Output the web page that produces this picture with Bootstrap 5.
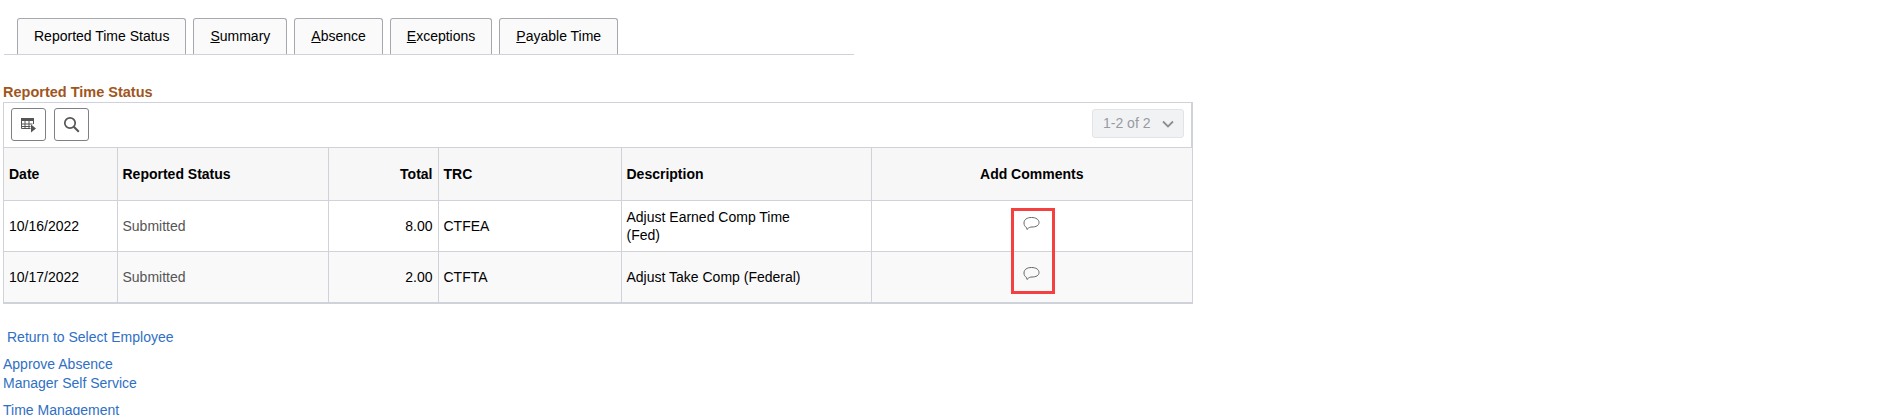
<!DOCTYPE html>
<html lang="en">
<head>
    <meta charset="UTF-8">
    <meta name="viewport" content="width=device-width, initial-scale=1.0">
    <title>Reported Time Status</title>
    <link href="https://cdn.jsdelivr.net/npm/bootstrap@5.3.0/dist/css/bootstrap.min.css" rel="stylesheet">
    <style>
        body {
            background-color: #fff;
            color: #000;
            font-family: "Liberation Sans", Arial, sans-serif;
            font-size: 14px;
        }
        .page-wrap {
            padding: 18px 0 0 3px;
        }
        /* tabs */
        .tab-strip {
            width: 850px;
            margin-left: 1px;
            padding-left: 13px;
            gap: 7px;
            height: 37px;
            border-bottom: 1px solid #cfd2d8;
        }
        .tab-strip .nav-link {
            height: 36px;
            padding: 0 16px;
            line-height: 34px;
            font-size: 14px;
            color: #000;
            background-color: #fafafb;
            border: 1px solid #a5a9af;
            border-bottom: 0;
            border-radius: 3px 3px 0 0;
        }
        .tab-strip .nav-link u {
            text-decoration-thickness: 1px;
        }
        .grid-title {
            margin: 28px 0 0;
            height: 19px;
            line-height: 19px;
            font-size: 14.5px;
            font-weight: 700;
            color: #a0561c;
        }
        /* grid */
        .grid-box {
            width: 1190px;
            border: 1px solid #cfd2d8;
            border-bottom-width: 2px;
            border-right-width: 2px;
        }
        .grid-tools {
            height: 44px;
            padding: 5px 7px 0;
        }
        .tool-btn {
            width: 35px;
            height: 33px;
            padding: 0;
            background: #fff;
            border: 1px solid #7d8187;
            border-radius: 3px;
        }
        .pager-btn {
            width: 92px;
            height: 29px;
            margin-top: 1px;
            padding: 0 9px 0 10px;
            color: #979ba1;
            font-size: 14px;
            background-color: #f1f2f4;
            border: 1px solid #e2e4e8;
            border-radius: 3px;
        }
        .grid-table {
            table-layout: fixed;
            width: 1188px;
            margin: 0;
            font-size: 14px;
            color: #000;
        }
        .grid-table th, .grid-table td {
            padding: 0 5px;
            vertical-align: middle;
            line-height: 18px;
            background: transparent;
            border: 0;
            border-top: 1px solid #cfd2d8;
            border-left: 1px solid #cfd2d8;
            box-shadow: none;
        }
        .grid-table th:first-child, .grid-table td:first-child {
            border-left: 0;
        }
        .grid-table thead tr {
            height: 53px;
            background-color: #f7f7f8;
        }
        .grid-table .row-a {
            height: 51px;
            background-color: #fff;
        }
        .grid-table .row-b {
            height: 50px;
            background-color: #f9f9fa;
        }
        .status-txt {
            color: #555;
        }
        .comment-ico {
            display: block;
            margin: -6px auto 0;
        }
        .red-frame {
            position: absolute;
            left: 1007px;
            top: 105px;
            width: 44px;
            height: 86px;
            border: 3px solid #f4413f;
            pointer-events: none;
        }
        /* links */
        .foot-links a {
            display: block;
            color: #2f6fc4;
            text-decoration: none;
            line-height: 19px;
        }
    </style>
</head>
<body>
    <div class="page-wrap">
        <ul class="nav tab-strip">
            <li class="nav-item"><a class="nav-link" href="#">Reported Time Status</a></li>
            <li class="nav-item"><a class="nav-link" href="#"><u>S</u>ummary</a></li>
            <li class="nav-item"><a class="nav-link" href="#"><u>A</u>bsence</a></li>
            <li class="nav-item"><a class="nav-link" href="#"><u>E</u>xceptions</a></li>
            <li class="nav-item"><a class="nav-link" href="#"><u>P</u>ayable Time</a></li>
        </ul>

        <h2 class="grid-title">Reported Time Status</h2>

        <div class="grid-box position-relative">
            <div class="grid-tools d-flex align-items-start">
                <button class="tool-btn d-flex align-items-center justify-content-center me-2" type="button" aria-label="Personalize">
                    <svg width="17" height="16" viewBox="0 0 17 16">
                        <path d="M1 1h13v3H1z" fill="#555"/>
                        <path d="M1.5 4v7.5h9M1.5 7h11M1.5 9.500h9M5 4v7.500M9 4v7.500M13.500 4v3" fill="none" stroke="#555" stroke-width="1"/>
                        <path d="M11 7.500l5 4-5 4z" fill="#555"/>
                    </svg>
                </button>
                <button class="tool-btn d-flex align-items-center justify-content-center" type="button" aria-label="Find">
                    <svg width="17" height="17" viewBox="0 0 17 17">
                        <circle cx="7" cy="7" r="5.200" fill="none" stroke="#555" stroke-width="1.700"/>
                        <path d="M10.800 10.800l5 5" stroke="#555" stroke-width="2" fill="none"/>
                    </svg>
                </button>
                <button class="pager-btn d-flex align-items-center justify-content-between ms-auto" type="button" disabled>
                    <span>1-2 of 2</span>
                    <svg width="12" height="8" viewBox="0 0 12 8">
                        <path d="M1 1.500l5 5 5-5" fill="none" stroke="#8b8f95" stroke-width="1.800"/>
                    </svg>
                </button>
            </div>

            <table class="table grid-table">
                <colgroup>
                    <col style="width:113px">
                    <col style="width:211px">
                    <col style="width:110px">
                    <col style="width:183px">
                    <col style="width:250px">
                    <col style="width:321px">
                </colgroup>
                <thead>
                    <tr>
                        <th>Date</th>
                        <th>Reported Status</th>
                        <th class="text-end">Total</th>
                        <th>TRC</th>
                        <th>Description</th>
                        <th class="text-center">Add Comments</th>
                    </tr>
                </thead>
                <tbody>
                    <tr class="row-a">
                        <td>10/16/2022</td>
                        <td class="status-txt">Submitted</td>
                        <td class="text-end">8.00</td>
                        <td>CTFEA</td>
                        <td>Adjust Earned Comp Time<br>(Fed)</td>
                        <td>
                            <svg class="comment-ico" width="17" height="15" viewBox="0 0 17 15">
                                <path d="M3.500 11.500C1.800 10.500 1 9 1 7 1 3.500 4 1.500 8.500 1.500S16 3.500 16 6.500 13 11 9 11c-1.500 0-3 .2-5 2.500z" fill="none" stroke="#666" stroke-width="1"/>
                            </svg>
                        </td>
                    </tr>
                    <tr class="row-b">
                        <td>10/17/2022</td>
                        <td class="status-txt">Submitted</td>
                        <td class="text-end">2.00</td>
                        <td>CTFTA</td>
                        <td>Adjust Take Comp (Federal)</td>
                        <td>
                            <svg class="comment-ico" width="17" height="15" viewBox="0 0 17 15">
                                <path d="M3.500 11.500C1.800 10.500 1 9 1 7 1 3.500 4 1.500 8.500 1.500S16 3.500 16 6.500 13 11 9 11c-1.500 0-3 .2-5 2.500z" fill="none" stroke="#666" stroke-width="1"/>
                            </svg>
                        </td>
                    </tr>
                </tbody>
            </table>
            <div class="red-frame"></div>
        </div>

        <div class="foot-links mt-4 pt-0">
            <a href="#" class="mb-2 ms-1 ps-0">Return to Select Employee</a>
            <a href="#" class="ms-0">Approve Absence</a>
            <a href="#" class="mb-2">Manager Self Service</a>
            <a href="#">Time Management</a>
        </div>
    </div>
</body>
</html>
